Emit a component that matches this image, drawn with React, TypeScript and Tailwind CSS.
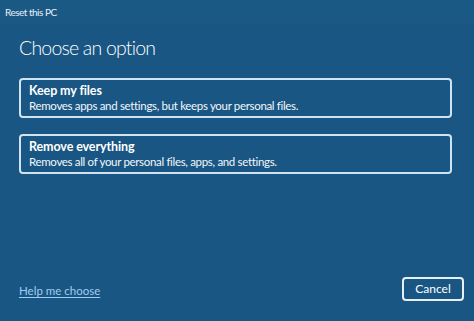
const OptionCard = ({ title, desc }: { title: string; desc: string }) => (
  <button className="flex h-[40px] w-[433px] flex-col justify-center rounded-[4px] border-2 border-[#cfe3f3] px-[8px] pt-[1px] text-left text-white">
    <span className="text-[12.5px] font-bold leading-[15px] tracking-[-0.1px]">{title}</span>
    <span className="text-[11.5px] leading-[16px] tracking-[-0.33px] text-[#f2f7fb]">{desc}</span>
  </button>
);

export default function App() {
  return (
    <div
      className="flex h-[321px] w-[474px] flex-col bg-[#195683] text-white"
      style={{ fontFamily: '"Segoe UI", Lato, "Noto Sans", sans-serif' }}
    >
      <div className="flex h-[24px] items-center bg-[#1b5985] px-[5px] text-[10px] tracking-[-0.5px] text-[#e8f0f6]">
        Reset this PC
      </div>
      <div className="flex flex-1 flex-col px-[19px]">
        <h1 className="mt-[10px] text-[19.5px] font-light leading-[28px] tracking-[-0.8px] text-white">
          Choose an option
        </h1>
        <div className="mt-[16px] flex flex-col gap-[16px]">
          <OptionCard title="Keep my files" desc="Removes apps and settings, but keeps your personal files." />
          <OptionCard title="Remove everything" desc="Removes all of your personal files, apps, and settings." />
        </div>
        <div className="mt-auto mb-[20px] flex items-center justify-between">
          <a href="#" className="mt-[4px] text-[11.5px] tracking-[0px] text-[#9fcdf0] underline underline-offset-2">
            Help me choose
          </a>
          <button className="mr-[-9px] h-[24px] w-[62px] rounded-[4px] border-2 border-[#e6f0f7] text-[12px] leading-none text-white">
            Cancel
          </button>
        </div>
      </div>
    </div>
  );
}
